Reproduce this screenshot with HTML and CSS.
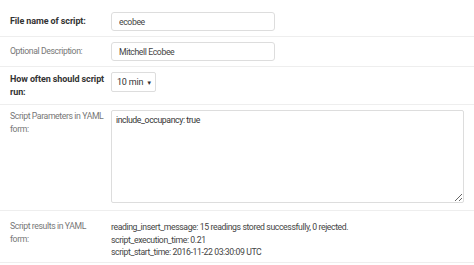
FILE: index.html
```html
<!DOCTYPE html>
<html>
<head>
  <meta charset="UTF-8">
  <title>Script settings</title>
  <link rel="stylesheet" href="styles.css">
</head>
<body>
  <div class="form">
    <div class="row first">
      <label class="label single strong">File name of script:</label>
      <div class="control"><input class="text-input" type="text" value="ecobee"></div>
    </div>
    <div class="row">
      <label class="label single">Optional Description:</label>
      <div class="control"><input class="text-input" type="text" value="Mitchell Ecobee"></div>
    </div>
    <div class="row">
      <label class="label multi strong">How often should script run:</label>
      <div class="control">
        <div class="select">10 min <span class="caret">&#9660;</span></div>
      </div>
    </div>
    <div class="row">
      <label class="label">Script Parameters in YAML form:</label>
      <div class="control wide"><textarea class="yaml" readonly>include_occupancy: true</textarea></div>
    </div>
    <div class="row last">
      <label class="label">Script results in YAML form:</label>
      <div class="control results">
        <div>reading_insert_message: 15 readings stored successfully, 0 rejected.</div>
        <div>script_execution_time: 0.21</div>
        <div>script_start_time: 2016-11-22 03:30:09 UTC</div>
      </div>
    </div>
  </div>
</body>
</html>
```

FILE: styles.css
```css
body {
  margin: 0;
  background: #fff;
  font-family: Roboto, "Liberation Sans", sans-serif;
  font-size: 8.7px;
  letter-spacing: -0.4px;
  color: #333;
}
.form {
  width: 474px;
}
.row {
  display: flex;
  align-items: flex-start;
  padding: 5px 0 5px 0;
  border-top: 1px solid #eee;
}
.row.first {
  border-top: none;
  padding-top: 12px;
}
.row.last {
  padding-top: 9px;
  padding-bottom: 2px;
  border-bottom: 1px solid #eee;
}
.label {
  flex: none;
  width: 95px;
  padding-left: 10px;
  margin-right: 6px;
  line-height: 13px;
  color: #777;
}
.label.single {
  padding-top: 3px;
}
.label.multi {
  padding-top: 1px;
}
.label.strong {
  width: 98px;
  margin-right: 3px;
  font-size: 9px;
  font-weight: bold;
  letter-spacing: -0.1px;
  color: #333;
}
.control {
  width: 164px;
}
.control.wide {
  width: 353px;
}
.text-input {
  box-sizing: border-box;
  width: 164px;
  height: 19px;
  margin: 0;
  padding: 0 7px;
  border: 1px solid #ddd;
  border-radius: 3px;
  font-family: inherit;
  font-size: 8.7px;
  letter-spacing: -0.4px;
  color: #444;
}
.select {
  box-sizing: border-box;
  display: inline-flex;
  align-items: center;
  white-space: nowrap;
  width: 45px;
  height: 20px;
  padding: 0 3px 0 5px;
  border: 1px solid #ddd;
  border-radius: 2px;
  color: #333;
  font-size: 9px;
  letter-spacing: -0.2px;
}
.caret {
  font-size: 6px;
  margin-left: auto;
}
.yaml {
  display: block;
  box-sizing: border-box;
  width: 353px;
  height: 93px;
  margin: 0 0 2px 0;
  padding: 4px 4px;
  border: 1px solid #ddd;
  border-radius: 2px;
  font-family: inherit;
  font-size: 8.7px;
  letter-spacing: -0.4px;
  color: #333;
  resize: vertical;
}
.results {
  width: 360px;
  line-height: 12.5px;
  color: #444;
  padding-top: 1px;
  padding-bottom: 1px;
}
```
